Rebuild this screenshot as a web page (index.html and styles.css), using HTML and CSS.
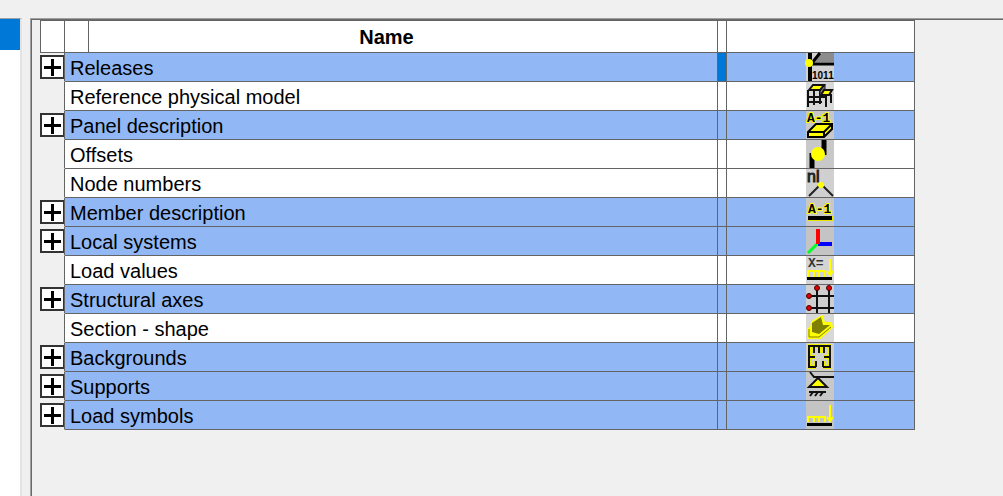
FILE: index.html
```html
<!DOCTYPE html>
<html lang="en">
    <head>
        <meta charset="utf-8" />
        <title>Display attributes</title>

        <link rel="stylesheet" href="styles.css">
    </head>

    <body>
        <aside class="categories">
            <div class="category-selected"></div>
        </aside>

        <main class="panel">
            <table class="attributes">
                <colgroup>
                    <col class="col-toggle">
                    <col class="col-indent">
                    <col>
                    <col class="col-mark">
                    <col class="col-icon">
                </colgroup>
                <thead>
                    <tr>
                        <th></th>
                        <th></th>
                        <th class="heading">Name</th>
                        <th></th>
                        <th></th>
                    </tr>
                </thead>
                <tbody>
                    <tr class="group">
                        <td class="toggle"><button class="expand" type="button" aria-label="Expand Releases"></button></td>
                        <td class="name" colspan="2">Releases</td>
                        <td class="mark current"></td>
                        <td class="icon">
                            <svg viewBox="0 0 28 28">
                                <rect width="28" height="28" fill="#d2d2d2"/>
                                <path d="M16 0H28V9H8Z" fill="#8c8c8c"/>
                                <path d="M4 0V28" stroke="#000" stroke-width="4"/>
                                <path d="M5 11H28M6 10L14 0" stroke="#000" stroke-width="3"/>
                                <circle cx="3" cy="10" r="4" fill="#ff0"/>
                                <text class="digits" x="6" y="26">1011</text>
                            </svg>
                        </td>
                    </tr>
                    <tr>
                        <td class="toggle"></td>
                        <td class="name" colspan="2">Reference physical model</td>
                        <td class="mark"></td>
                        <td class="icon">
                            <svg viewBox="0 0 28 28">
                                <rect width="28" height="28" fill="#d8d8d8"/>
                                <path d="M2 8V25M8 9V23M14 9V22M20 13V25M25 12V21M1 15H20M1 20H16" fill="none" stroke="#111" stroke-width="2"/>
                                <path d="M14 8L19 3V9L14 15Z" fill="#777" stroke="#111"/>
                                <path d="M3 8L7 3H18L14 8Z" fill="#ff0" stroke="#111" stroke-width="2"/>
                                <path d="M15 13L18 8H26L23 13Z" fill="#ff0" stroke="#111" stroke-width="2"/>
                            </svg>
                        </td>
                    </tr>
                    <tr class="group">
                        <td class="toggle"><button class="expand" type="button" aria-label="Expand Panel description"></button></td>
                        <td class="name" colspan="2">Panel description</td>
                        <td class="mark"></td>
                        <td class="icon">
                            <svg viewBox="0 0 28 28">
                                <rect width="28" height="28" fill="#c8c8c8"/>
                                <text class="label" x="1" y="11">A-1</text>
                                <path d="M2 21L10 13H26V18L18 26H2Z" fill="#ff0" stroke="#000" stroke-width="2"/>
                                <path d="M2 21H18L26 13M18 21V26" fill="none" stroke="#000" stroke-width="2"/>
                            </svg>
                        </td>
                    </tr>
                    <tr>
                        <td class="toggle"></td>
                        <td class="name" colspan="2">Offsets</td>
                        <td class="mark"></td>
                        <td class="icon">
                            <svg viewBox="0 0 28 28">
                                <rect width="28" height="28" fill="#c8c8c8"/>
                                <path d="M18 0V15M6 13V28" stroke="#000" stroke-width="5"/>
                                <circle cx="12" cy="14" r="7" fill="#ff0"/>
                            </svg>
                        </td>
                    </tr>
                    <tr>
                        <td class="toggle"></td>
                        <td class="name" colspan="2">Node numbers</td>
                        <td class="mark"></td>
                        <td class="icon">
                            <svg viewBox="0 0 28 28">
                                <rect width="28" height="28" fill="#d0d0d0"/>
                                <text class="node" x="1" y="13">nl</text>
                                <path d="M13 17L3 27M17 17L27 27" stroke="#222" stroke-width="2"/>
                                <circle cx="15" cy="16" r="3" fill="#ff0"/>
                            </svg>
                        </td>
                    </tr>
                    <tr class="group">
                        <td class="toggle"><button class="expand" type="button" aria-label="Expand Member description"></button></td>
                        <td class="name" colspan="2">Member description</td>
                        <td class="mark"></td>
                        <td class="icon">
                            <svg viewBox="0 0 28 28">
                                <rect width="28" height="28" fill="#c8c8c8"/>
                                <text class="label" x="2" y="15">A-1</text>
                                <rect x="1" y="18" width="26" height="5" fill="#e8e800"/>
                                <rect x="2" y="18" width="24" height="4"/>
                            </svg>
                        </td>
                    </tr>
                    <tr class="group">
                        <td class="toggle"><button class="expand" type="button" aria-label="Expand Local systems"></button></td>
                        <td class="name" colspan="2">Local systems</td>
                        <td class="mark"></td>
                        <td class="icon">
                            <svg viewBox="0 0 28 28">
                                <rect width="28" height="28" fill="#c4c4c4"/>
                                <path d="M11 17L2 26" stroke="#0f2" stroke-width="3"/>
                                <path d="M12 17H26" stroke="#00f" stroke-width="4"/>
                                <path d="M12 2V17" stroke="#f00" stroke-width="4"/>
                            </svg>
                        </td>
                    </tr>
                    <tr>
                        <td class="toggle"></td>
                        <td class="name" colspan="2">Load values</td>
                        <td class="mark"></td>
                        <td class="icon">
                            <svg viewBox="0 0 28 28">
                                <rect width="28" height="28" fill="#d4d4d4"/>
                                <text class="value" x="2" y="11">X=</text>
                                <path d="M2 21V15H19V21M8 15V21M13 15V21M24 3V19M21 15L24 19L27 15" fill="none" stroke="#ff0" stroke-width="2"/>
                                <rect x="1" y="21" width="25" height="3"/>
                            </svg>
                        </td>
                    </tr>
                    <tr class="group">
                        <td class="toggle"><button class="expand" type="button" aria-label="Expand Structural axes"></button></td>
                        <td class="name" colspan="2">Structural axes</td>
                        <td class="mark"></td>
                        <td class="icon">
                            <svg viewBox="0 0 28 28">
                                <rect width="28" height="28" fill="#cfcfcf"/>
                                <path d="M11 3V28M23 3V28M3 11H28M3 23H28" stroke="#111" stroke-width="2"/>
                                <g fill="#e00000" stroke="#400" stroke-width="1">
                                    <circle cx="11" cy="3" r="2.500"/>
                                    <circle cx="23" cy="3" r="2.500"/>
                                    <circle cx="3" cy="11" r="2.500"/>
                                    <circle cx="3" cy="23" r="2.500"/>
                                </g>
                            </svg>
                        </td>
                    </tr>
                    <tr>
                        <td class="toggle"></td>
                        <td class="name" colspan="2">Section - shape</td>
                        <td class="mark"></td>
                        <td class="icon">
                            <svg viewBox="0 0 28 28">
                                <rect width="28" height="28" fill="#d8d8d8"/>
                                <path d="M2 15L5 14L6 8L16 2L18 9L25 9L26 13L14 24H2Z" fill="#ff0" stroke="#ff0" stroke-width="2" stroke-linejoin="round"/>
                                <path d="M6 9L15 3L17 11H24L13 20L6 18Z" fill="#808000"/>
                                <path d="M3 15V23H13L25 13" fill="none" stroke="#808000" stroke-width="1"/>
                            </svg>
                        </td>
                    </tr>
                    <tr class="group">
                        <td class="toggle"><button class="expand" type="button" aria-label="Expand Backgrounds"></button></td>
                        <td class="name" colspan="2">Backgrounds</td>
                        <td class="mark"></td>
                        <td class="icon">
                            <svg viewBox="0 0 28 28">
                                <rect width="28" height="28" fill="#d0d0c8"/>
                                <g fill="none">
                                    <path d="M10 24H3V3H24V24H17M8 3V10M13 3V10M18 3V10M3 14H9M24 14H18M10 18V24M17 18V24" stroke="#ee0" stroke-width="4"/>
                                    <path d="M10 24H3V3H24V24H17M8 3V10M13 3V10M18 3V10M3 14H9M24 14H18M10 18V24M17 18V24" stroke="#111" stroke-width="2"/>
                                </g>
                            </svg>
                        </td>
                    </tr>
                    <tr class="group">
                        <td class="toggle"><button class="expand" type="button" aria-label="Expand Supports"></button></td>
                        <td class="name" colspan="2">Supports</td>
                        <td class="mark"></td>
                        <td class="icon">
                            <svg viewBox="0 0 28 28">
                                <rect width="28" height="28" fill="#c8c8c8"/>
                                <path d="M4 0L8 5H28" fill="none" stroke="#111" stroke-width="2"/>
                                <path d="M12 6L3 15H21Z" fill="#ff0" stroke="#111" stroke-width="2"/>
                                <path d="M3 20H20M7 20L4 24M12 20L9 24M17 20L14 24" stroke="#111" stroke-width="2"/>
                            </svg>
                        </td>
                    </tr>
                    <tr class="group">
                        <td class="toggle"><button class="expand" type="button" aria-label="Expand Load symbols"></button></td>
                        <td class="name" colspan="2">Load symbols</td>
                        <td class="mark"></td>
                        <td class="icon">
                            <svg viewBox="0 0 28 28">
                                <rect width="28" height="28" fill="#c4c4c4"/>
                                <path d="M2 21V16H19V21M8 16V21M13 16V21M24 4V20M21 16L24 20L27 16" fill="none" stroke="#ff0" stroke-width="2"/>
                                <rect x="1" y="22" width="25" height="3"/>
                            </svg>
                        </td>
                    </tr>
                </tbody>
            </table>
        </main>
    </body>
</html>
```
FILE: styles.css
```css
/* Base
=============================================== */
* {
    margin: 0;
    padding: 0;
    box-sizing: border-box;
}

body {
    display: flex;
    gap: 8px;
    min-height: 100vh;
    padding-top: 18px;
    background-color: #f0f0f0;
    color: #000;
    font-family: "Liberation Sans", Arial, sans-serif;
    font-size: 20px;
    line-height: 26px;
}

/* Category list, mostly off to the left */
.categories {
    flex: 0 0 22px;
    background-color: #fff;
    border-top: 1px solid #a0a0a0;
    border-right: 2px solid #e3e3e3;
}

.category-selected {
    height: 31px;
    background-color: #0078d7;
}

/* Attribute panel with a sunken edge */
.panel {
    flex: 1;
    padding-left: 9px;
    padding-right: 88px;
    border-top: 1px solid #a0a0a0;
    border-left: 1px solid #a0a0a0;
    box-shadow: inset 1px 1px 0 #696969;
}

/* Table
=============================================== */
.attributes {
    width: 100%;
    margin-top: 1px;
    table-layout: fixed;
    border-collapse: separate;
    border-spacing: 0;
}

.col-toggle {
    width: 25px;
}

.col-indent {
    width: 24px;
}

.col-mark {
    width: 9px;
}

.col-icon {
    width: 188px;
}

th,
td {
    border-right: 1px solid #646464;
    border-bottom: 1px solid #646464;
}

th {
    height: 33px;
    background-color: #fff;
    border-top: 1px solid #646464;
}

th:first-child {
    border-left: 1px solid #646464;
}

.heading {
    padding-right: 33px;
    font-weight: bold;
}

td {
    height: 29px;
    background-color: #fff;
}

.group td {
    background-color: #91b7f5;
}

td.toggle,
.group td.toggle {
    border-bottom-color: transparent;
    background-color: transparent;
}

.name {
    padding-top: 2px;
    padding-left: 5px;
    white-space: nowrap;
}

.group td.current {
    background-color: #0078d7;
}

/* Plus box */
.expand {
    display: block;
    width: 24px;
    height: 24px;
    border: 2px solid #333;
    border-right-width: 1px;
    background:
        linear-gradient(#000, #000) center / 17px 3px no-repeat,
        linear-gradient(#000, #000) center / 3px 17px no-repeat,
        #fff;
}

/* Icons
=============================================== */
.icon {
    padding-right: 1px;
}

.icon svg {
    display: block;
    width: 28px;
    height: 28px;
    margin: 0 auto;
    overflow: visible;
}

.label,
.value {
    font-family: "Liberation Mono", monospace;
    font-weight: bold;
}

.digits {
    font-size: 10px;
    font-weight: bold;
}

.label {
    font-size: 13px;
    stroke: #ff0;
    stroke-width: 2px;
    paint-order: stroke;
}

.value {
    font-size: 13px;
    fill: #333;
}

.node {
    font-size: 16px;
    fill: #222;
    stroke: #222;
}
```
